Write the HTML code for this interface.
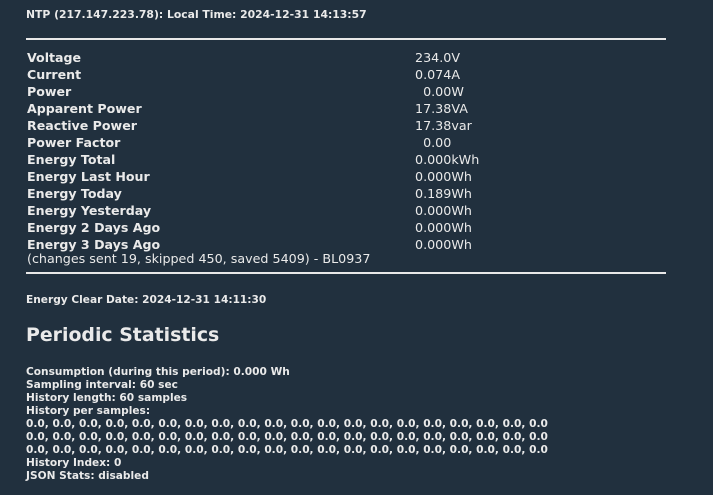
<!DOCTYPE html>
<html><head><meta charset="utf-8"><style>
html,body{margin:0;padding:0;background:#21303e;width:713px;height:495px;overflow:hidden;color:#eaeaea;font-family:"DejaVu Sans","Liberation Sans",sans-serif}
.a{position:absolute;white-space:pre;line-height:1}
.s{font-size:10.6px;font-weight:bold}
.l{font-size:12.6px;font-weight:bold}
.v{font-size:12.7px}
.hr{position:absolute;left:26px;width:640px;height:2px;background:#e8e8e8}
</style></head><body>
<div class="a s" style="left:26px;top:10px;font-size:10.8px">NTP (217.147.223.78): Local Time: 2024-12-31 14:13:57</div>
<div class="hr" style="top:38px"></div>
<div class="a l" style="left:27px;top:49px;line-height:17px">Voltage
Current
Power
Apparent Power
Reactive Power
Power Factor
Energy Total
Energy Last Hour
Energy Today
Energy Yesterday
Energy 2 Days Ago
Energy 3 Days Ago</div>
<div class="a v" style="left:415px;top:49px;line-height:17px">234.0V
0.074A
  0.00W
17.38VA
17.38var
  0.00
0.000kWh
0.000Wh
0.189Wh
0.000Wh
0.000Wh
0.000Wh</div>
<div class="a v" style="left:27px;top:253px">(changes sent 19, skipped 450, saved 5409) - BL0937</div>
<div class="hr" style="top:272px"></div>
<div class="a s" style="left:26px;top:295px">Energy Clear Date: 2024-12-31 14:11:30</div>
<div class="a" style="left:26px;top:326px;font-size:18.9px;font-weight:bold">Periodic Statistics</div>
<div class="a s" style="left:26px;top:366px;line-height:13px">Consumption (during this period): 0.000 Wh
Sampling interval: 60 sec
History length: 60 samples
History per samples:
0.0, 0.0, 0.0, 0.0, 0.0, 0.0, 0.0, 0.0, 0.0, 0.0, 0.0, 0.0, 0.0, 0.0, 0.0, 0.0, 0.0, 0.0, 0.0, 0.0
0.0, 0.0, 0.0, 0.0, 0.0, 0.0, 0.0, 0.0, 0.0, 0.0, 0.0, 0.0, 0.0, 0.0, 0.0, 0.0, 0.0, 0.0, 0.0, 0.0
0.0, 0.0, 0.0, 0.0, 0.0, 0.0, 0.0, 0.0, 0.0, 0.0, 0.0, 0.0, 0.0, 0.0, 0.0, 0.0, 0.0, 0.0, 0.0, 0.0
History Index: 0
JSON Stats: disabled</div>
</body></html>
